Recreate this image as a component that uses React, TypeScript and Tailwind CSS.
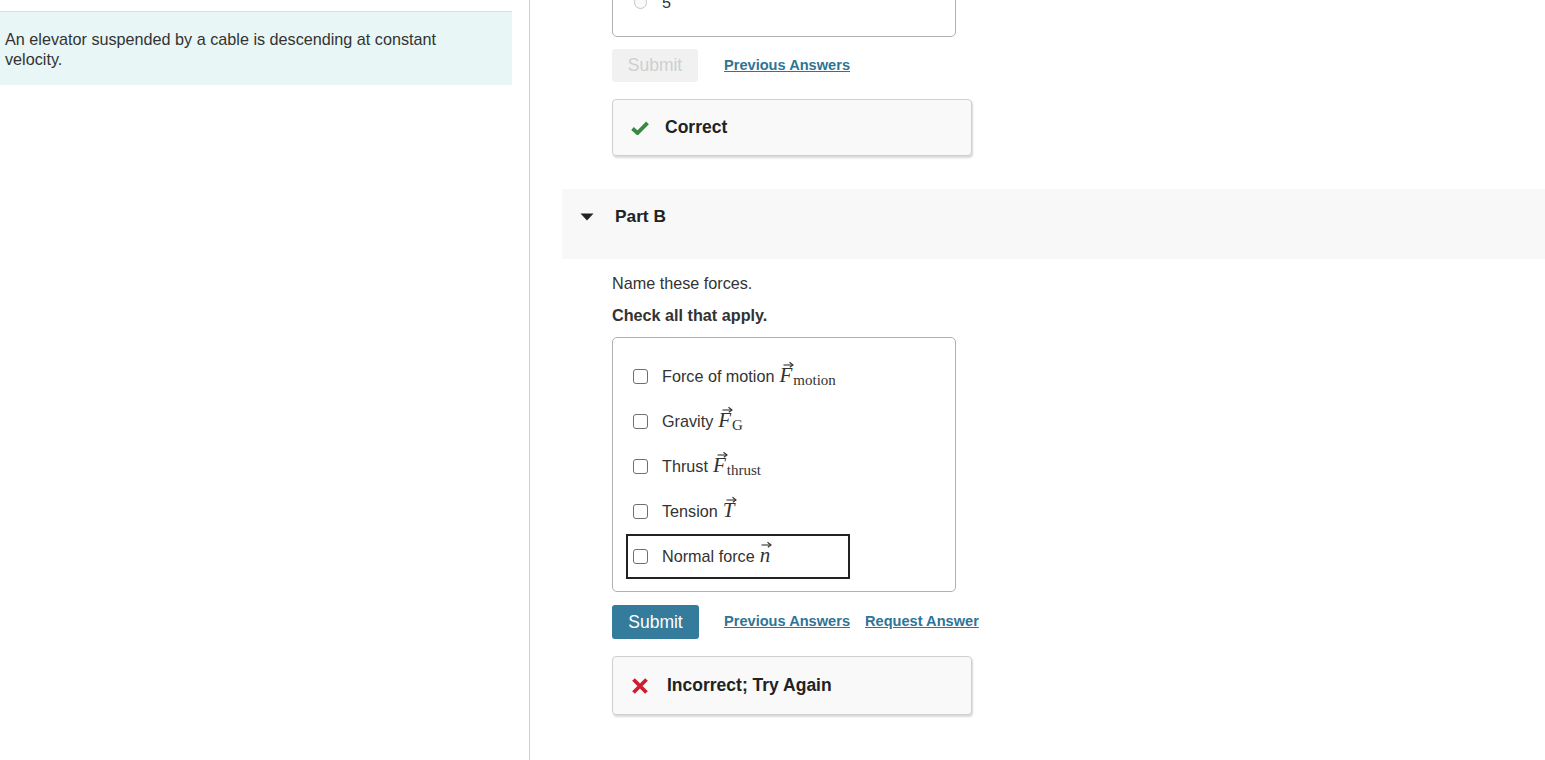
import React from "react";

function Arrow({ left }: { left: number }) {
  return (
    <svg
      className="absolute top-[-4px]"
      style={{ left }}
      width="11"
      height="7"
      viewBox="0 0 11 7"
    >
      <path d="M0.5 4 H9.5" stroke="#333" strokeWidth="1.1" fill="none" />
      <path d="M6.5 1.2 L10 4 L6.8 6.2" stroke="#333" strokeWidth="1.1" fill="none" />
    </svg>
  );
}

function Vec({ letter, sub, arrowLeft = 4 }: { letter: string; sub?: string; arrowLeft?: number }) {
  return (
    <span className="inline-flex items-baseline ml-[5px] text-[#333]" style={{ fontFamily: '"Liberation Serif", "DejaVu Serif", serif' }}>
      <span className="relative inline-block italic text-[21px] leading-none">
        {letter}
        <Arrow left={arrowLeft} />
      </span>
      {sub && (
        <span className="text-[15px] leading-none relative top-[3px] ml-[1px]">{sub}</span>
      )}
    </span>
  );
}

function CheckRow({ label, letter, sub, focused, arrowLeft }: { label: string; letter: string; sub?: string; focused?: boolean; arrowLeft?: number }) {
  return (
    <div
      className={
        "flex items-center h-[45px] w-[224px] pl-[5px] border-2 " +
        (focused ? "border-[#222]" : "border-transparent")
      }
    >
      <span className="w-[15px] h-[15px] rounded-[3px] border border-[#6f6f6f] bg-white shrink-0" />
      <span className="ml-[14px] text-[16.2px] text-[#333] flex items-baseline">
        {label}
        <Vec letter={letter} sub={sub} arrowLeft={arrowLeft} />
      </span>
    </div>
  );
}

function CheckIcon() {
  return (
    <svg width="18" height="14" viewBox="0 0 18 14">
      <path d="M1.5 7.5 L6.5 12 L16.5 1.8" stroke="#3b873f" strokeWidth="3.8" fill="none" />
    </svg>
  );
}

function XIcon() {
  return (
    <svg width="18" height="18" viewBox="0 0 18 18">
      <path d="M2.5 2.5 L15.5 15.5 M15.5 2.5 L2.5 15.5" stroke="#cf1f2f" strokeWidth="3.8" fill="none" />
    </svg>
  );
}

export default function App() {
  return (
    <div
      className="flex h-[760px] overflow-hidden bg-white text-[#333]"
      style={{ fontFamily: '"Liberation Sans", Arial, sans-serif' }}
    >
      {/* Left column */}
      <div className="w-[530px] shrink-0 border-r border-[#c9d0d6] pt-[11px]">
        <div className="w-[512px] h-[74px] border-t border-[#dcdcdc] bg-[#e8f6f6] pl-[5px] pt-[17px]">
          <p className="w-[470px] text-[16.2px] leading-[20px] text-[#333]">
            An elevator suspended by a cable is descending at constant velocity.
          </p>
        </div>
      </div>

      {/* Right column */}
      <div className="flex-1 pl-[32px] flex flex-col">
        <div className="pl-[50px] flex flex-col">
          {/* Radio card (partially scrolled) */}
          <div className="w-[344px] h-[67px] -mt-[30px] rounded-[5px] border border-[#b0b0b0] pl-[21px] pt-[23px]">
            <div className="flex items-center h-[16px]">
              <span className="w-[13px] h-[13px] rounded-full border border-[#c4c4c4] bg-[#fafafa]" />
              <span className="ml-[15px] text-[16.2px] text-[#333]">5</span>
            </div>
          </div>

          {/* Submit (disabled) row */}
          <div className="flex items-center mt-[12px] h-[33px]">
            <div className="w-[86px] h-[33px] rounded-[3px] bg-[#f1f1f1] text-[#cfcfcf] text-[17.5px] flex items-center justify-center">
              Submit
            </div>
            <a className="ml-[26px] text-[14.6px] font-bold text-[#2f7497] underline">Previous Answers</a>
          </div>

          {/* Correct */}
          <div className="mt-[17px] w-[360px] h-[57px] rounded-[4px] border border-[#cfcfcf] bg-[#f9f9f9] shadow-[1px_2px_2px_rgba(0,0,0,0.15)] flex items-center pl-[18px]">
            <CheckIcon />
            <span className="ml-[16px] font-bold text-[17.5px] text-[#222]">Correct</span>
          </div>
        </div>

        {/* Part B header */}
        <div className="mt-[33px] h-[70px] bg-[#f8f8f8] flex items-center pl-[18px] pb-[15px]">
          <svg width="14" height="8" viewBox="0 0 14 8">
            <path d="M0.5 0.5 H13.5 L7 7.5 Z" fill="#222" />
          </svg>
          <span className="ml-[21px] font-bold text-[17.3px] text-[#222]">Part B</span>
        </div>

        <div className="pl-[50px] flex flex-col">
          <p className="mt-[14px] text-[16.2px] leading-[20px] text-[#333]">Name these forces.</p>
          <p className="mt-[12px] text-[16.2px] leading-[20px] font-bold text-[#333]">Check all that apply.</p>

          <div className="mt-[12px] w-[344px] h-[255px] rounded-[5px] border border-[#b0b0b0] pt-[16px] pl-[13px]">
            <CheckRow label="Force of motion" letter="F" sub="motion" />
            <CheckRow label="Gravity" letter="F" sub="G" />
            <CheckRow label="Thrust" letter="F" sub="thrust" />
            <CheckRow label="Tension" letter="T" arrowLeft={3} />
            <CheckRow label="Normal force" letter="n" focused arrowLeft={1} />
          </div>

          <div className="flex items-center mt-[13px] h-[34px]">
            <div className="w-[87px] h-[34px] rounded-[3px] bg-[#347b9c] text-white text-[17.5px] flex items-center justify-center">
              Submit
            </div>
            <a className="ml-[25px] text-[14.6px] font-bold text-[#2f7497] underline">Previous Answers</a>
            <a className="ml-[15px] text-[14.6px] font-bold text-[#2f7497] underline">Request Answer</a>
          </div>

          <div className="mt-[17px] w-[360px] h-[59px] rounded-[4px] border border-[#cfcfcf] bg-[#f9f9f9] shadow-[1px_2px_2px_rgba(0,0,0,0.15)] flex items-center pl-[18px]">
            <XIcon />
            <span className="ml-[18px] font-bold text-[17.5px] text-[#222]">Incorrect; Try Again</span>
          </div>
        </div>
      </div>
    </div>
  );
}
